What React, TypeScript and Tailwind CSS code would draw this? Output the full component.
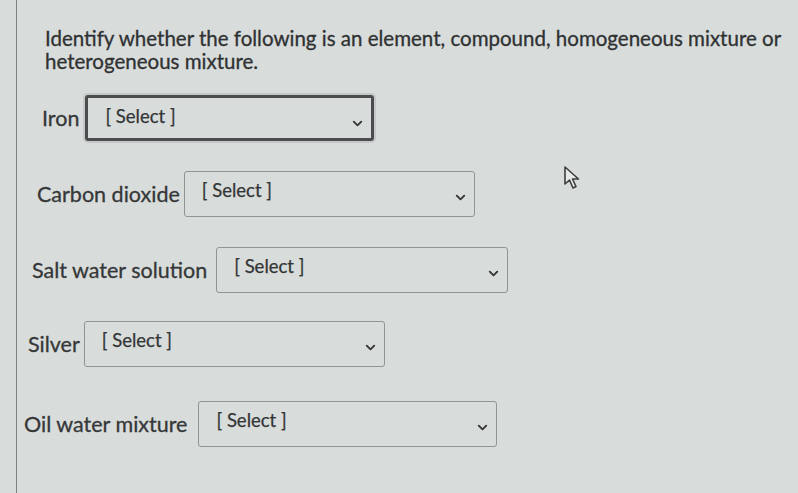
import { ChevronDown } from 'lucide-react';

const rows = [
  { label: 'Iron', row: 'mt-[22px] pl-[25px] gap-[6px]', box: 'w-[289px]', focused: true },
  { label: 'Carbon dioxide', row: 'mt-[30px] pl-[20px] gap-[4px]', box: 'w-[291px]', focused: false },
  { label: 'Salt water solution', row: 'mt-[30px] pl-[15px] gap-[9px]', box: 'w-[292px]', focused: false },
  { label: 'Silver', row: 'mt-[28px] pl-[11px] gap-[4px]', box: 'w-[301px]', focused: false },
  { label: 'Oil water mixture', row: 'mt-[34px] pl-[7px] gap-[11px]', box: 'w-[299px]', focused: false },
];

const SelectBox = ({ width, focused }: { width: string; focused: boolean }) => (
  <div
    className={`relative h-[46px] ${width} rounded-[3px] ${
      focused
        ? 'border-[3px] border-[#4a4c4d] shadow-[0_0_0_2px_#c4c8c8]'
        : 'border border-[#8f9494]'
    }`}
  >
    <span className="absolute left-[17px] top-[5px] text-[18.5px] text-[#333536] [-webkit-text-stroke:0.25px_#333536]">
      [ Select ]
    </span>
    <ChevronDown
      className="absolute right-[6px] top-[18px] w-[15px] h-[15px] text-[#333536]"
      strokeWidth={3}
    />
  </div>
);

const App = () => {
  return (
    <div
      className="relative w-[798px] h-[493px] overflow-hidden bg-[#d8dcdb]"
      style={{ fontFamily: 'Lato, "Open Sans", sans-serif' }}
    >
      <div className="ml-[16px] h-full border-l border-[#7c8080] pt-[27px]">
        <p className="pl-[28px] pr-[4px] text-[20.5px] leading-[23px] text-[#2f3132] [-webkit-text-stroke:0.3px_#2f3132]">
          Identify whether the following is an element, compound, homogeneous mixture or
          heterogeneous mixture.
        </p>

        {rows.map((r) => (
          <div key={r.label} className={`flex items-center ${r.row}`}>
            <span className="text-[21.5px] text-[#353738] [-webkit-text-stroke:0.3px_#353738]">
              {r.label}
            </span>
            <SelectBox width={r.box} focused={r.focused} />
          </div>
        ))}
      </div>

      <svg
        className="absolute left-[563px] top-[165px]"
        width="20"
        height="26"
        viewBox="0 0 20 26"
      >
        <path
          d="M2 2 L2 19 L6.5 15 L10 23 L13 21.5 L9.5 14 L15.5 14 Z"
          fill="#e8eaea"
          stroke="#3c3e3f"
          strokeWidth="1.6"
          strokeLinejoin="round"
        />
      </svg>
    </div>
  );
};

export default App;
